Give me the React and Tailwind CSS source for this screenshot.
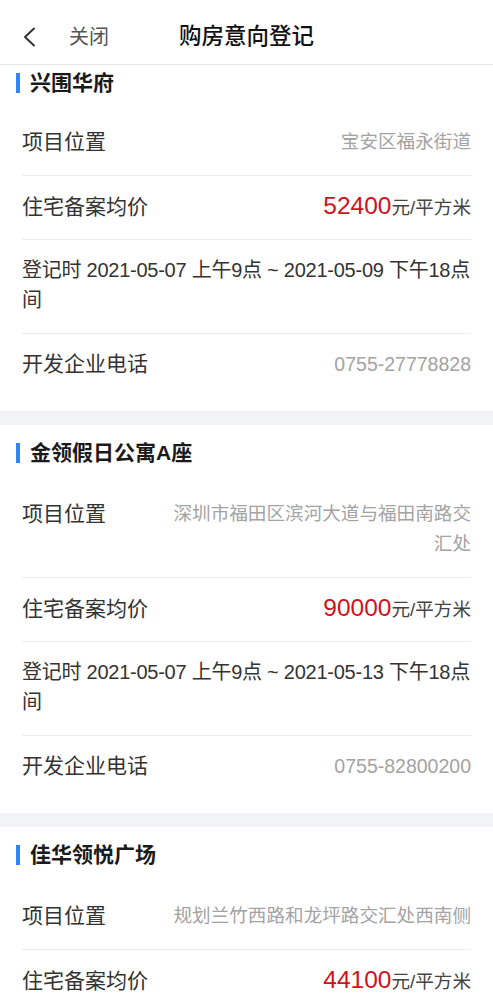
import React from "react";

const sections = [
  {
    title: "兴围华府",
    first: true,
    location: "宝安区福永街道",
    price: "52400",
    time: "登记时 2021-05-07 上午9点 ~ 2021-05-09 下午18点间",
    phone: "0755-27778828",
  },
  {
    title: "金领假日公寓A座",
    location: "深圳市福田区滨河大道与福田南路交汇处",
    price: "90000",
    time: "登记时 2021-05-07 上午9点 ~ 2021-05-13 下午18点间",
    phone: "0755-82800200",
  },
  {
    title: "佳华领悦广场",
    location: "规划兰竹西路和龙坪路交汇处西南侧",
    price: "44100",
  },
];

function Row({ children, last }) {
  return (
    <div className={"mx-[22px] pt-[15px] pb-[18px] leading-[30px] " + (last ? "" : "border-b border-[#ececec]")}>
      {children}
    </div>
  );
}

function Section({ s }) {
  return (
    <div className="bg-white pb-[14px]">
      <div className={"flex items-center pl-4 " + (s.first ? "pt-2 pb-[19px]" : "pt-[18px] pb-[21px]")}>
        <div className="h-[20px] w-[4px] bg-[#2f86f6]" />
        <div className="ml-[10px] text-[21px] font-bold leading-[20px] text-[#1a1a1a]">{s.title}</div>
      </div>
      <Row>
        <div className="flex items-start justify-between">
          <span className="text-[21px] text-[#333]">项目位置</span>
          <span className="w-[300px] text-right text-[18.6px] text-[#a3a3a3]">{s.location}</span>
        </div>
      </Row>
      <Row last={!s.time}>
        <div className="flex h-[30px] items-baseline justify-between">
          <span className="text-[21px] leading-[30px] text-[#333]">住宅备案均价</span>
          <div className="flex items-baseline">
            <span className="text-[24.5px] leading-[30px] text-[#d0121b]">{s.price}</span>
            <span className="text-[18.6px] leading-[30px] text-[#444]">元/平方米</span>
          </div>
        </div>
      </Row>
      {s.time && (
        <Row>
          <div className="text-[20px] tracking-[-0.25px] text-[#333]">{s.time}</div>
        </Row>
      )}
      {s.phone && (
        <Row last>
          <div className="flex h-[30px] items-baseline justify-between">
            <span className="text-[21px] leading-[30px] text-[#333]">开发企业电话</span>
            <span className="text-[19.5px] leading-[30px] text-[#a3a3a3]">{s.phone}</span>
          </div>
        </Row>
      )}
    </div>
  );
}

export default function App() {
  return (
    <div
      className="h-[1000px] w-[493px] overflow-hidden bg-[#f1f3f6]"
      style={{ fontFamily: '"Liberation Sans", "Noto Sans CJK SC", sans-serif' }}
    >
      <div className="grid h-[65px] grid-cols-[1fr_auto_1fr] items-center border-b border-[#e6e6e6] bg-white pt-[10px]">
        <div className="flex items-center pl-[22px]">
          <svg width="14" height="20" viewBox="0 0 14 20" fill="none">
            <path d="M12 1.5 L3 10 L12 18.5" stroke="#333" strokeWidth="2" strokeLinecap="round" strokeLinejoin="round" />
          </svg>
          <span className="ml-[33px] text-[20px] text-[#555]">关闭</span>
        </div>
        <div className="text-[22.5px] font-medium text-[#111]">购房意向登记</div>
        <div />
      </div>
      <div className="flex flex-col gap-[14px]">
        {sections.map((s) => (
          <Section key={s.title} s={s} />
        ))}
      </div>
    </div>
  );
}
